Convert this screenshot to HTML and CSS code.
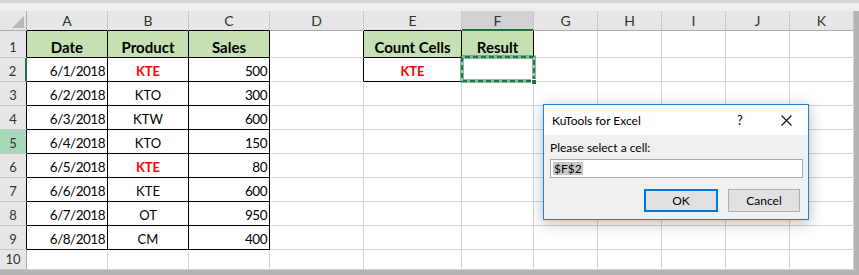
FILE: index.html
```html
<!DOCTYPE html>
<html>
<head>
<meta charset="utf-8">
<link rel="stylesheet" href="styles.css">
</head>
<body>
<div class="sheet">
  <div class="topstrip"></div>
  <div class="main">
    <div class="grid">
      <div class="c h corner"></div>
      <div class="c h">A</div><div class="c h">B</div><div class="c h">C</div><div class="c h">D</div><div class="c h">E</div><div class="c h hsel">F</div><div class="c h">G</div><div class="c h">H</div><div class="c h">I</div><div class="c h">J</div><div class="c h">K</div>

      <div class="c rh bk">1</div>
      <div class="c t g">Date</div><div class="c t g">Product</div><div class="c t g">Sales</div><div class="c bk"></div><div class="c t g">Count Cells</div><div class="c t g">Result</div><div class="c"></div><div class="c"></div><div class="c"></div><div class="c"></div><div class="c"></div>

      <div class="c rh bk rsel">2</div>
      <div class="c t r">6/1/2018</div><div class="c t m red">KTE</div><div class="c t r">500</div><div class="c bk"></div><div class="c t m red">KTE</div><div class="c t"></div><div class="c"></div><div class="c"></div><div class="c"></div><div class="c"></div><div class="c"></div>

      <div class="c rh bk">3</div>
      <div class="c t r">6/2/2018</div><div class="c t m">KTO</div><div class="c t r">300</div><div class="c"></div><div class="c"></div><div class="c"></div><div class="c"></div><div class="c"></div><div class="c"></div><div class="c"></div><div class="c"></div>

      <div class="c rh bk">4</div>
      <div class="c t r">6/3/2018</div><div class="c t m">KTW</div><div class="c t r">600</div><div class="c"></div><div class="c"></div><div class="c"></div><div class="c"></div><div class="c"></div><div class="c"></div><div class="c"></div><div class="c"></div>

      <div class="c rh bk hover">5</div>
      <div class="c t r">6/4/2018</div><div class="c t m">KTO</div><div class="c t r">150</div><div class="c"></div><div class="c"></div><div class="c"></div><div class="c"></div><div class="c"></div><div class="c"></div><div class="c"></div><div class="c"></div>

      <div class="c rh bk">6</div>
      <div class="c t r">6/5/2018</div><div class="c t m red">KTE</div><div class="c t r">80</div><div class="c"></div><div class="c"></div><div class="c"></div><div class="c"></div><div class="c"></div><div class="c"></div><div class="c"></div><div class="c"></div>

      <div class="c rh bk">7</div>
      <div class="c t r">6/6/2018</div><div class="c t m">KTE</div><div class="c t r">600</div><div class="c"></div><div class="c"></div><div class="c"></div><div class="c"></div><div class="c"></div><div class="c"></div><div class="c"></div><div class="c"></div>

      <div class="c rh bk">8</div>
      <div class="c t r">6/7/2018</div><div class="c t m">OT</div><div class="c t r">950</div><div class="c"></div><div class="c"></div><div class="c"></div><div class="c"></div><div class="c"></div><div class="c"></div><div class="c"></div><div class="c"></div>

      <div class="c rh bk">9</div>
      <div class="c t r">6/8/2018</div><div class="c t m">CM</div><div class="c t r">400</div><div class="c"></div><div class="c"></div><div class="c"></div><div class="c"></div><div class="c"></div><div class="c"></div><div class="c"></div><div class="c"></div>

      <div class="c rh">10</div>
      <div class="c"></div><div class="c"></div><div class="c"></div><div class="c"></div><div class="c"></div><div class="c"></div><div class="c"></div><div class="c"></div><div class="c"></div><div class="c"></div><div class="c"></div>
    </div>
    <div class="vscroll"></div>
  </div>
  <div class="hscroll"></div>
</div>

<svg class="ants" width="80" height="33" viewBox="0 0 80 33">
  <rect x="4" y="4" width="72" height="24" fill="none" stroke="#217346" stroke-width="3"/>
  <rect x="4" y="4" width="72" height="24" fill="none" stroke="#ffffff" stroke-width="1.2" stroke-dasharray="3 5"/>
  <rect x="73.5" y="26.5" width="5" height="5" fill="#217346" stroke="#ffffff" stroke-width="1"/>
</svg>

<div class="dialog">
  <div class="dtitle">
    <span class="dname">KuTools for Excel</span>
    <span class="help">?</span>
    <span class="close"><svg width="11" height="11" viewBox="0 0 11 11"><path d="M0.5 0.5 L10.5 10.5 M10.5 0.5 L0.5 10.5" stroke="#111" stroke-width="1.1" fill="none"/></svg></span>
  </div>
  <div class="dbody">
    <div class="dlabel">Please select a cell:</div>
    <div class="dinput"><span class="seltext">$F$2</span></div>
    <div class="dbtns">
      <div class="btn ok">OK</div>
      <div class="btn">Cancel</div>
    </div>
  </div>
</div>
</body>
</html>
```

FILE: styles.css
```css
html, body {
  margin: 0;
  padding: 0;
}
body {
  width: 859px;
  height: 275px;
  overflow: hidden;
  background: #ffffff;
  font-family: Lato, "Liberation Sans", sans-serif;
  position: relative;
}
.sheet {
  display: flex;
  flex-direction: column;
}
.topstrip {
  height: 8px;
  border-top: 3px solid #d4d4d4;
  background: #eeeeee;
}
.main {
  display: flex;
}
.grid {
  display: grid;
  grid-template-columns: 27px 81px 81px 81px 94px 98px 72px 64px 64px 64px 64px 64px;
  grid-template-rows: 20px 27px repeat(8, 24px) 20px;
}
.vscroll {
  width: 5px;
  background: #b4b4b4;
}
.hscroll {
  height: 5px;
  background: #b4b4b4;
}
.c {
  box-sizing: border-box;
  border-right: 1px solid #d4d4d4;
  border-bottom: 1px solid #d4d4d4;
  display: flex;
  align-items: flex-end;
  padding: 0 2px 2px 2px;
  font-size: 13.5px;
  letter-spacing: -0.5px;
  line-height: 16px;
  color: #000;
  white-space: nowrap;
  overflow: hidden;
}
.h {
  background: #e6e6e6;
  border-right-color: #c8c8c8;
  border-bottom-color: #ababab;
  justify-content: center;
  align-items: center;
  padding: 1px 0 0 0;
  font-size: 14px;
  letter-spacing: 0;
  color: #333;
}
.hsel {
  background: #d2d2d2;
  border-bottom: 2px solid #217346;
}
.corner {
  justify-content: flex-end;
  align-items: flex-end;
  padding: 0 2px 2px 0;
  border-right-color: #ababab;
}
.corner::after {
  content: "";
  width: 0;
  height: 0;
  border-left: 12px solid transparent;
  border-bottom: 12px solid #b8b8b8;
}
.rh {
  background: #e6e6e6;
  border-right-color: #ababab;
  border-bottom-color: #c8c8c8;
  justify-content: center;
  padding: 0 0 2px 0;
  font-size: 13px;
  letter-spacing: 0;
  color: #333;
}
.rsel {
  border-right: 2px solid #217346;
}
.hover {
  background: #a8d8b9;
}
.bk {
  border-right-color: #000;
}
.rsel.bk {
  border-right-color: #217346;
}
.t {
  border-right-color: #000;
  border-bottom-color: #000;
}
.grid > .h:nth-child(2),
.grid > .h:nth-child(3),
.grid > .h:nth-child(4),
.grid > .h:nth-child(6) {
  border-bottom-color: #000;
}
.g {
  background: #c6e0b4;
  justify-content: center;
  font-weight: 700;
  font-size: 15px;
  letter-spacing: 0;
  line-height: 18px;
  padding-bottom: 1px;
}
.r {
  justify-content: flex-end;
}
.m {
  justify-content: center;
  letter-spacing: 0;
  font-size: 13px;
}
.red {
  color: #ff0000;
  font-weight: 700;
}
.ants {
  position: absolute;
  left: 458px;
  top: 53px;
}
.dialog {
  position: absolute;
  left: 543px;
  top: 104px;
  width: 266px;
  height: 116px;
  box-sizing: border-box;
  border: 1px solid #1883d7;
  background: #f0f0f0;
  box-shadow: 0 3px 14px rgba(0, 0, 0, 0.28);
  display: flex;
  flex-direction: column;
  font-size: 12px;
  color: #000;
}
.dtitle {
  height: 30px;
  background: #ffffff;
  display: flex;
  align-items: center;
  padding-left: 8px;
}
.dname {
  flex: 1;
  padding-top: 1px;
}
.help {
  width: 16px;
  text-align: center;
  margin-right: 16px;
  font-size: 13px;
}
.close {
  width: 44px;
  display: flex;
  justify-content: center;
  align-items: center;
}
.close svg {
  display: block;
}
.dbody {
  display: flex;
  flex-direction: column;
  padding: 5px 5px 0 6px;
}
.dlabel {
  line-height: 16px;
  height: 16px;
  margin-bottom: 3px;
}
.dinput {
  height: 19px;
  box-sizing: border-box;
  border: 1px solid #a6a6a6;
  background: #ffffff;
  display: flex;
  align-items: center;
  padding-left: 2px;
}
.seltext {
  background: #c8c8c8;
  line-height: 13px;
  padding: 0 1px;
}
.dbtns {
  display: flex;
  justify-content: flex-end;
  gap: 10px;
  padding-right: 3px;
  margin-top: 11px;
}
.btn {
  width: 72px;
  height: 23px;
  box-sizing: border-box;
  border: 1px solid #adadad;
  background: #e1e1e1;
  display: flex;
  justify-content: center;
  align-items: center;
}
.btn.ok {
  width: 74px;
  border: 2px solid #0078d7;
}
```
